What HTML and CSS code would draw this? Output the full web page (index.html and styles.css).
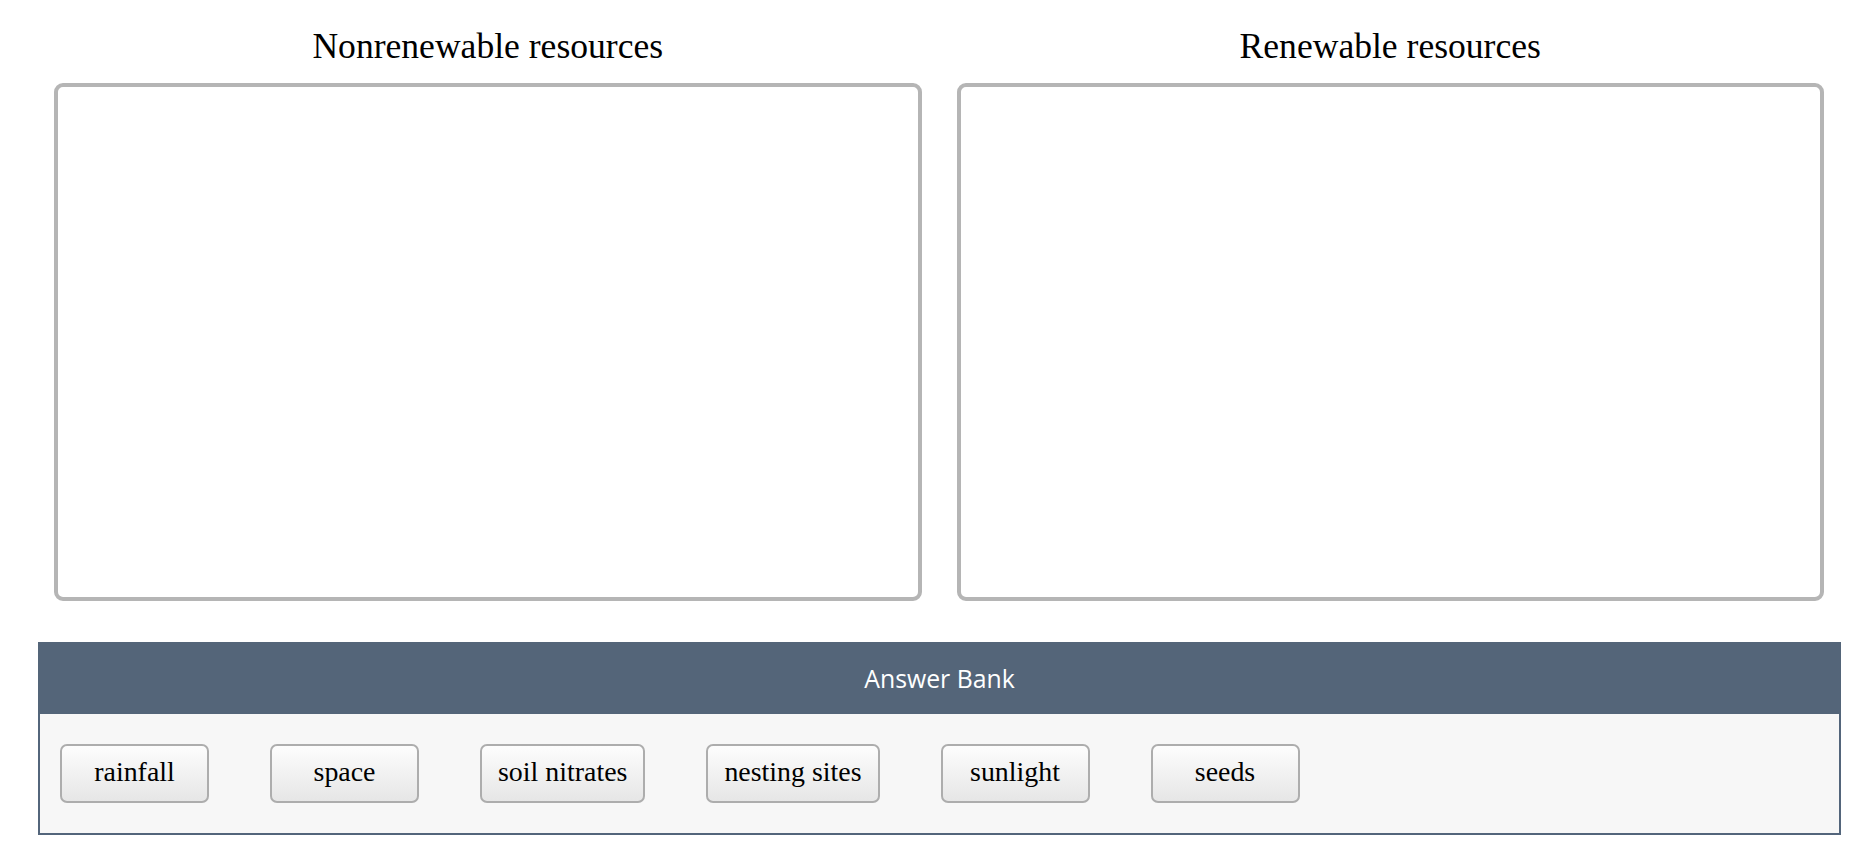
FILE: index.html
```html
<!DOCTYPE html>
<html lang="en">
<head>
  <meta charset="UTF-8">
  <title>Sort the resources</title>
  <link rel="stylesheet" href="styles.css">
</head>
<body>

  <!-- Drop targets -->
  <div class="bins">
    <div class="bin">
      <h2 class="bin-title">Nonrenewable resources</h2>
      <div class="drop-zone"></div>
    </div>
    <div class="bin">
      <h2 class="bin-title">Renewable resources</h2>
      <div class="drop-zone"></div>
    </div>
  </div>

  <!-- Answer bank -->
  <div class="answer-bank">
    <div class="bank-header">Answer Bank</div>
    <div class="bank-items">
      <button class="chip">rainfall</button>
      <button class="chip">space</button>
      <button class="chip">soil nitrates</button>
      <button class="chip">nesting sites</button>
      <button class="chip">sunlight</button>
      <button class="chip">seeds</button>
    </div>
  </div>

</body>
</html>
```

FILE: styles.css
```css
/* General Styling */
body {
  margin: 0;
  padding: 0;
  background-color: #fff;
  font-family: "Liberation Serif", "Times New Roman", serif;
  color: #000;
}

/* Bins */
.bins {
  display: flex;
  gap: 35px;
  padding: 26px 52px 0 54px;
}

.bin {
  flex: 1;
  display: flex;
  flex-direction: column;
}

.bin-title {
  margin: 0 0 16px;
  font-size: 35.6px;
  font-weight: normal;
  line-height: 41px;
  text-align: center;
}

.drop-zone {
  height: 510px;
  border: 4px solid #b5b5b5;
  border-radius: 9px;
  background-color: #fff;
}

/* Answer Bank */
.answer-bank {
  margin: 41px 35px 0 38px;
  border: 2px solid #53657b;
  border-top: none;
  background-color: #f7f7f7;
}

.bank-header {
  height: 72px;
  line-height: 72px;
  margin: 0 -2px;
  background-color: #546579;
  color: #fff;
  font-family: "Open Sans", sans-serif;
  font-size: 24.8px;
  text-align: center;
}

.bank-items {
  display: flex;
  gap: 61px;
  padding: 30px 20px;
}

.chip {
  min-width: 149px;
  height: 59px;
  padding: 0 16px 4px;
  border: 2px solid #adadad;
  border-radius: 7px;
  background: linear-gradient(#fdfdfd, #e6e6e6);
  font-family: "Liberation Serif", "Times New Roman", serif;
  font-size: 27.9px;
  color: #000;
  cursor: pointer;
}
```
